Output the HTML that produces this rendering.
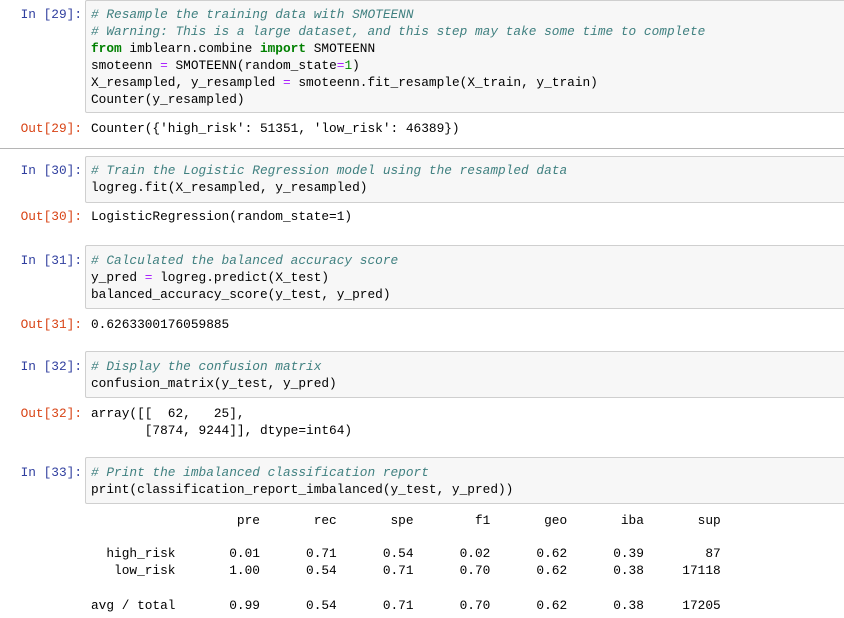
<!DOCTYPE html>
<html><head><meta charset="utf-8">
<style>
body{margin:0;width:844px;height:618px;background:#fff;overflow:hidden;position:relative;font-family:"Liberation Mono",monospace;font-size:12.8px;color:#000}
.box{position:absolute;left:85px;width:780px;background:#f7f7f7;border:1px solid #cfcfcf;border-radius:2px}
pre{margin:0;font:inherit;line-height:17px;position:absolute;left:91px;white-space:pre}
.p{position:absolute;right:762px;line-height:17px;white-space:pre}
.in{color:#303F9F}.out{color:#D84315}
.c{color:#408080;font-style:italic}.k{color:#008000;font-weight:bold}.o{color:#AA22FF}.n{color:#008800}
.sep{position:absolute;left:0;width:844px;top:148px;height:1px;background:#b5b5b5}
</style></head><body>
<div class="box" style="top:0px;height:111px"></div>
<div class="p in" style="top:6px">In [29]:</div>
<pre style="top:6px"><span class="c"># Resample the training data with SMOTEENN</span>
<span class="c"># Warning: This is a large dataset, and this step may take some time to complete</span>
<span class="k">from</span> imblearn.combine <span class="k">import</span> SMOTEENN
smoteenn <span class="o">=</span> SMOTEENN(random_state<span class="o">=</span><span class="n">1</span>)
X_resampled, y_resampled <span class="o">=</span> smoteenn.fit_resample(X_train, y_train)
Counter(y_resampled)</pre>
<div class="p out" style="top:120px">Out[29]:</div>
<pre style="top:120px">Counter({'high_risk': 51351, 'low_risk': 46389})</pre>
<div class="sep"></div>

<div class="box" style="top:156px;height:45px"></div>
<div class="p in" style="top:162px">In [30]:</div>
<pre style="top:162px"><span class="c"># Train the Logistic Regression model using the resampled data</span>
logreg.fit(X_resampled, y_resampled)</pre>
<div class="p out" style="top:208px">Out[30]:</div>
<pre style="top:208px">LogisticRegression(random_state=1)</pre>

<div class="box" style="top:245px;height:62px"></div>
<div class="p in" style="top:252px">In [31]:</div>
<pre style="top:252px"><span class="c"># Calculated the balanced accuracy score</span>
y_pred <span class="o">=</span> logreg.predict(X_test)
balanced_accuracy_score(y_test, y_pred)</pre>
<div class="p out" style="top:316px">Out[31]:</div>
<pre style="top:316px">0.6263300176059885</pre>

<div class="box" style="top:351px;height:45px"></div>
<div class="p in" style="top:358px">In [32]:</div>
<pre style="top:358px"><span class="c"># Display the confusion matrix</span>
confusion_matrix(y_test, y_pred)</pre>
<div class="p out" style="top:405px">Out[32]:</div>
<pre style="top:405px">array([[  62,   25],
       [7874, 9244]], dtype=int64)</pre>

<div class="box" style="top:457px;height:45px"></div>
<div class="p in" style="top:464px">In [33]:</div>
<pre style="top:464px"><span class="c"># Print the imbalanced classification report</span>
print(classification_report_imbalanced(y_test, y_pred))</pre>
<pre style="top:512px">                   pre       rec       spe        f1       geo       iba       sup</pre>
<pre style="top:545px">  high_risk       0.01      0.71      0.54      0.02      0.62      0.39        87
   low_risk       1.00      0.54      0.71      0.70      0.62      0.38     17118</pre>
<pre style="top:597px">avg / total       0.99      0.54      0.71      0.70      0.62      0.38     17205</pre>
</body></html>
